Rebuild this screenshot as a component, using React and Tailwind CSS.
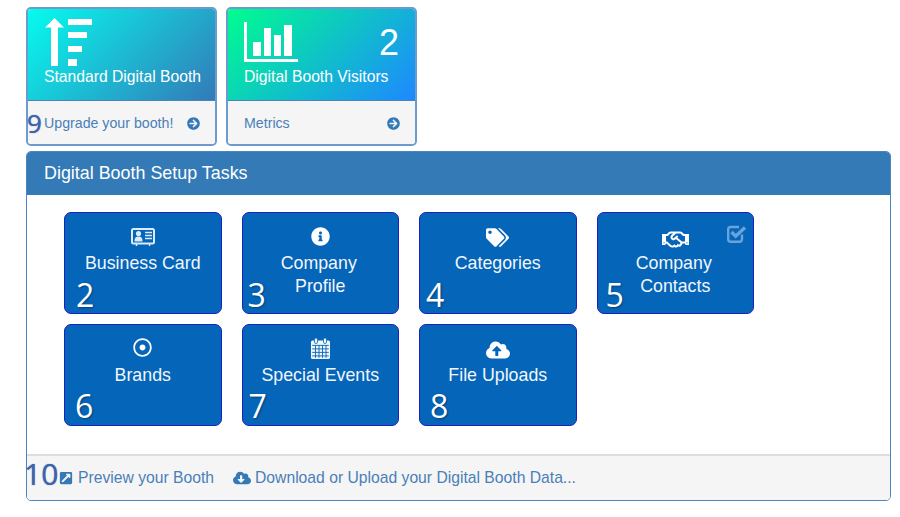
import React from "react";
import { FaArrowCircleRight, FaInfoCircle, FaTags, FaRegHandshake, FaRegDotCircle, FaCloudUploadAlt, FaCloudDownloadAlt, FaExternalLinkSquareAlt } from "react-icons/fa";

function UpgradeIcon() {
  return (
    <svg width="48" height="48" viewBox="0 0 48 48" fill="white" className="block ml-[1px]">
      <path d="M0 9.5 L9.5 0 L19 9.5 L13 9.5 L13 48 L6 48 L6 9.5 Z" />
      <rect x="23" y="1" width="24" height="6" />
      <rect x="23" y="14" width="19" height="6" />
      <rect x="23" y="28" width="14" height="6" />
      <rect x="23" y="41" width="9" height="7" />
    </svg>
  );
}

function ChartIcon() {
  return (
    <svg width="55" height="40" viewBox="0 0 55 40" fill="white" className="block mt-[4px]">
      <rect x="0" y="0" width="3" height="40" />
      <rect x="0" y="37" width="54" height="3" />
      <rect x="9" y="20" width="8" height="14" />
      <rect x="20" y="6" width="7" height="28" />
      <rect x="30" y="13" width="7" height="21" />
      <rect x="40" y="3" width="8" height="31" />
    </svg>
  );
}

function CardIcon() {
  return (
    <svg width="24" height="18" viewBox="0 0 24 18" className="block mt-[2px] text-[#dcebf8]">
      <rect x="1" y="1" width="22" height="14.5" rx="1.5" fill="none" stroke="currentColor" strokeWidth="2" />
      <circle cx="7.5" cy="5.5" r="2.6" fill="currentColor" />
      <path d="M3.5 13.5 C3.5 9.5 5 8.5 7.5 8.5 C10 8.5 11.5 9.5 11.5 13.5 Z" fill="currentColor" />
      <path d="M14 4.5 H21 M14 7.5 H21 M14 10.5 H21" stroke="currentColor" strokeWidth="1.4" />
      <path d="M5.5 15.5 V18 M18.5 15.5 V18" stroke="currentColor" strokeWidth="1.5" />
    </svg>
  );
}

function CalendarIcon() {
  return (
    <svg width="19" height="21" viewBox="0 0 19 21" className="block text-[#eef5fb]">
      <rect x="0" y="2.5" width="19" height="18.5" rx="1.5" fill="currentColor" />
      <rect x="3.5" y="0" width="3" height="5.5" rx="1.4" fill="currentColor" stroke="#0565b9" strokeWidth="0.8" />
      <rect x="12.5" y="0" width="3" height="5.5" rx="1.4" fill="currentColor" stroke="#0565b9" strokeWidth="0.8" />
      <path d="M1.2 7.4 H17.8 M1.2 10.9 H17.8 M1.2 14.4 H17.8 M1.2 17.9 H17.8 M4.5 7 V19.8 M8 7 V19.8 M11.5 7 V19.8 M15 7 V19.8" stroke="#0565b9" strokeWidth="0.9" fill="none" />
    </svg>
  );
}

function CheckIcon() {
  return (
    <svg width="20" height="18" viewBox="0 0 20 18" className="block text-[#6aa3da]">
      <path d="M15 9.5 V14 C15 15.6 14 16.7 12.3 16.7 H3.7 C2 16.7 1.2 15.6 1.2 14 V4.5 C1.2 3 2 2 3.7 2 H12" fill="none" stroke="currentColor" strokeWidth="2.4" />
      <path d="M4.5 7 L8.7 11.2 L18 2.5" fill="none" stroke="currentColor" strokeWidth="3.4" />
    </svg>
  );
}

function SummaryCard({ gradient, icon, title, count, children }) {
  return (
    <div className="relative w-[191px] h-[139px] rounded-[5px] border-2 border-[#6c9bcd] overflow-hidden flex flex-col">
      <div className={`h-[92px] shrink-0 border-b border-[#4b84bb] px-[16px] pt-[1px] ${gradient} text-white relative`}>
        <div className="h-[57px] flex items-start justify-between pt-[8px]">
          {icon}
          {count && <span className="text-[36px] leading-[38px] mt-[6px]">{count}</span>}
        </div>
        <div className="text-[15.7px] leading-[20px] whitespace-nowrap">{title}</div>
      </div>
      <div className="flex-1 bg-[#f5f5f5] flex items-center justify-between pl-[16px] pr-[15px] pt-[2px] text-[#4a7fb8] text-[14.2px]">
        {children}
      </div>
    </div>
  );
}

function Tile({ icon, lines, n, numClass, check }) {
  return (
    <div className="relative w-[157.5px] h-[102px] rounded-[7px] border border-[#1a1fc0] bg-[#0565b9] text-white text-center">
      <div className="h-[32px] pt-[13px] flex justify-center">{icon}</div>
      <div className="mt-[7px] text-[17.8px] leading-[23px] text-[#f2f6fb]">
        {lines.map((l, i) => <div key={l} className={lines.length > 1 && i === 0 ? "pr-[3px]" : ""}>{l}</div>)}
      </div>
      <span className={`absolute ${numClass} text-[32px] leading-[42px] text-white [font-family:'Open_Sans',sans-serif] [text-shadow:1px_1px_2px_rgba(0,0,0,0.35)]`}>{n}</span>
      {check && <div className="absolute right-[6px] top-[12px]"><CheckIcon /></div>}
    </div>
  );
}

export default function App() {
  return (
    <div className="w-[900px] h-[517px] bg-white pl-[26px] pt-[7px] overflow-hidden relative [font-family:'Liberation_Sans',Arial,sans-serif]">
      <div className="flex gap-[9px]">
        <SummaryCard gradient="bg-[linear-gradient(135deg,#06fbee,#337ab7)]" icon={<UpgradeIcon />} title="Standard Digital Booth">
          <span>Upgrade your booth!</span>
          <FaArrowCircleRight size={13} className="text-[#337ab7]" />
        </SummaryCard>
        <SummaryCard gradient="bg-[linear-gradient(135deg,#00fd8f,#1e88ff)]" icon={<ChartIcon />} title="Digital Booth Visitors" count="2">
          <span>Metrics</span>
          <FaArrowCircleRight size={13} className="text-[#337ab7]" />
        </SummaryCard>
      </div>

      <div className="mt-[5px] w-[865px] h-[350px] rounded-[5px] border border-[#4b86bd] overflow-hidden flex flex-col">
        <div className="h-[43px] shrink-0 bg-[#337ab7] text-white text-[17.9px] flex items-center pl-[17px]">Digital Booth Setup Tasks</div>
        <div className="flex-1 bg-white pt-[17px] pl-[37px]">
          <div className="grid grid-cols-[157.5px_157.5px_157.5px_157.5px] gap-x-[20px] gap-y-[10px]">
            <Tile icon={<CardIcon />} lines={["Business Card"]} n="2" numClass="left-[11px] bottom-[-3px]" />
            <Tile icon={<FaInfoCircle size={19} className="mt-[1px]" />} lines={["Company", "Profile"]} n="3" numClass="left-[5px] bottom-[-3px]" />
            <Tile icon={<FaTags size={23} />} lines={["Categories"]} n="4" numClass="left-[6px] bottom-[-3px]" />
            <Tile icon={<FaRegHandshake size={27} />} lines={["Company", "Contacts"]} n="5" numClass="left-[8px] bottom-[-3px]" check />
            <Tile icon={<FaRegDotCircle size={19} />} lines={["Brands"]} n="6" numClass="left-[10px] bottom-[-2px]" />
            <Tile icon={<CalendarIcon />} lines={["Special Events"]} n="7" numClass="left-[6px] bottom-[-2px]" />
            <Tile icon={<FaCloudUploadAlt size={24} />} lines={["File Uploads"]} n="8" numClass="left-[10px] bottom-[-2px]" />
          </div>
        </div>
        <div className="h-[46px] shrink-0 bg-[#f5f5f5] border-t-2 border-[#dddddd] flex items-center pl-[32px] text-[#4a7fb8] text-[15.7px]">
          <FaExternalLinkSquareAlt size={14} className="text-[#337ab7] mr-[5px]" />
          <span>Preview your Booth</span>
          <FaCloudDownloadAlt size={18} className="text-[#337ab7] ml-[19px] mr-[4px]" />
          <span>Download or Upload your Digital Booth Data...</span>
        </div>
      </div>

      <span className="absolute left-[27px] top-[106px] text-[26px] leading-[34px] text-[#3f63ab] [font-family:'Open_Sans',sans-serif] [text-shadow:0_0_1px_#3f63ab]">9</span>
      <span className="absolute left-[24px] top-[454px] text-[30px] leading-[40px] text-[#3f63ab] [font-family:'Open_Sans',sans-serif] [text-shadow:0_0_1px_#3f63ab]">10</span>
    </div>
  );
}
